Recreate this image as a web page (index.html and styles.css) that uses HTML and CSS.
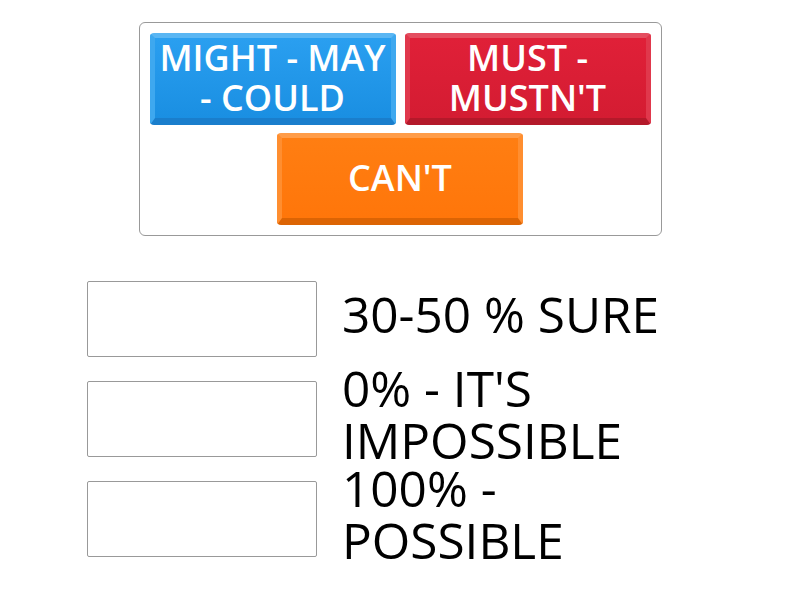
FILE: index.html
```html
<!DOCTYPE html>
<html lang="en">
<head>
    <meta charset="UTF-8">
    <meta name="viewport" content="width=device-width, initial-scale=1.0">
    <title>Match up</title>
    <link rel="stylesheet" href="styles.css">
</head>
<body>
    <div class="bank">
        <div class="tile blue">MIGHT - MAY - COULD</div>
        <div class="tile red">MUST - MUSTN'T</div>
        <div class="tile orange">CAN'T</div>
    </div>

    <div class="targets">
        <div class="row">
            <div class="slot"></div>
            <div class="label">30-50 % SURE</div>
        </div>
        <div class="row">
            <div class="slot"></div>
            <div class="label">0% - IT'S IMPOSSIBLE</div>
        </div>
        <div class="row">
            <div class="slot"></div>
            <div class="label">100% - POSSIBLE</div>
        </div>
    </div>
</body>
</html>
```

FILE: styles.css
```css
body {
    margin: 0;
    padding: 0;
    background-color: white;
    font-family: "Open Sans", "Liberation Sans", sans-serif;
    width: 800px;
    height: 600px;
    overflow: hidden;
}

.bank {
    width: 501px;
    margin: 22px auto 0;
    padding: 10px;
    border: 1px solid #999;
    border-radius: 6px;
    display: flex;
    flex-wrap: wrap;
    justify-content: center;
    gap: 8px 9px;
}

.tile {
    box-sizing: border-box;
    width: 246px;
    height: 92px;
    border-radius: 4px;
    border-style: solid;
    border-width: 5px 5px 7px 5px;
    color: white;
    font-weight: 600;
    font-size: 36px;
    line-height: 40px;
    text-align: center;
    display: flex;
    align-items: center;
    justify-content: center;
    padding: 0;
}

.blue {
    background: linear-gradient(#2a9ff0, #1a8fe2);
    border-color: #5ab6f3 #3ea8ef #1a7ecc #3ea8ef;
}

.red {
    background: linear-gradient(#e02038, #d41c32);
    border-color: #e44e60 #e0384c #b4192a #e0384c;
}

.orange {
    background: linear-gradient(#ff7e12, #ff760a);
    border-color: #ff9c48 #ff8e30 #dc6404 #ff8e30;
}

.targets {
    margin: 45px 0 0 87px;
}

.row {
    display: flex;
    align-items: center;
    gap: 25px;
    height: 76px;
    margin-bottom: 24px;
}

.slot {
    box-sizing: border-box;
    width: 230px;
    height: 76px;
    border: 1px solid #999;
    border-radius: 2px;
    flex-shrink: 0;
}

.label {
    font-size: 49.5px;
    line-height: 52px;
    color: #000;
    width: 340px;
    margin-bottom: 11px;
}
```
